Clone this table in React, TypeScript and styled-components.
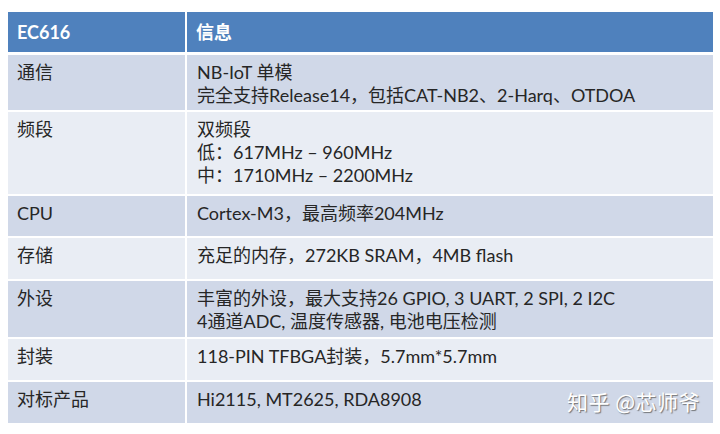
import styled, { createGlobalStyle } from "styled-components";

const GlobalStyle = createGlobalStyle`
  html, body {
    margin: 0;
    padding: 0;
    background: #ffffff;
  }
`;

const Page = styled.div`
  position: relative;
  width: 720px;
  height: 434px;
  padding: 12px 0 0 8px;
  box-sizing: border-box;
  font-family: Lato, "Noto Sans CJK SC", sans-serif;
`;

const Table = styled.div`
  display: grid;
  grid-template-columns: 177px 526px;
  column-gap: 2px;
  row-gap: 2px;
  width: 705px;
`;

const HeadCell = styled.div`
  height: 40px;
  margin-bottom: 1px;
  background: #4f81bd;
  color: #ffffff;
  font-weight: 700;
  font-size: 18px;
  line-height: 40px;
  padding: 0 9px;
  box-sizing: border-box;
`;

const Cell = styled.div<{ $odd: boolean; $h: number; $first?: boolean }>`
  height: ${(p) => p.$h}px;
  background: ${(p) => (p.$odd ? "#d0d8e8" : "#e9edf4")};
  color: #262626;
  font-size: 18px;
  line-height: 23px;
  padding: 6px ${(p) => (p.$first ? "9px" : "10px")};
  box-sizing: border-box;
  white-space: nowrap;
`;

const Line = styled.div``;

const Watermark = styled.div`
  position: absolute;
  right: 20px;
  bottom: 20px;
  font-family: "Noto Sans CJK SC", sans-serif;
  font-size: 21px;
  line-height: 26px;
  color: #ffffff;
  letter-spacing: 0.5px;
  text-shadow: 1px 1px 1px rgba(90, 90, 90, 0.8);
`;

const rows: { label: string; lines: string[]; h: number }[] = [
  { label: "通信", lines: ["NB-IoT 单模", "完全支持Release14，包括CAT-NB2、2-Harq、OTDOA"], h: 55 },
  { label: "频段", lines: ["双频段", "低：617MHz – 960MHz", "中：1710MHz – 2200MHz"], h: 82 },
  { label: "CPU", lines: ["Cortex-M3，最高频率204MHz"], h: 40 },
  { label: "存储", lines: ["充足的内存，272KB SRAM，4MB flash"], h: 41 },
  { label: "外设", lines: ["丰富的外设，最大支持26 GPIO, 3 UART, 2 SPI, 2 I2C", "4通道ADC, 温度传感器, 电池电压检测"], h: 56 },
  { label: "封装", lines: ["118-PIN TFBGA封装，5.7mm*5.7mm"], h: 41 },
  { label: "对标产品", lines: ["Hi2115, MT2625, RDA8908"], h: 41 },
];

function App() {
  return (
    <Page>
      <GlobalStyle />
      <Table>
        <HeadCell>EC616</HeadCell>
        <HeadCell>信息</HeadCell>
        {rows.map((r, i) => [
          <Cell key={r.label + "a"} $odd={i % 2 === 0} $h={r.h} $first>
            {r.label}
          </Cell>,
          <Cell key={r.label + "b"} $odd={i % 2 === 0} $h={r.h}>
            {r.lines.map((l) => (
              <Line key={l}>{l}</Line>
            ))}
          </Cell>,
        ])}
      </Table>
      <Watermark>知乎 @芯师爷</Watermark>
    </Page>
  );
}

export default App;
